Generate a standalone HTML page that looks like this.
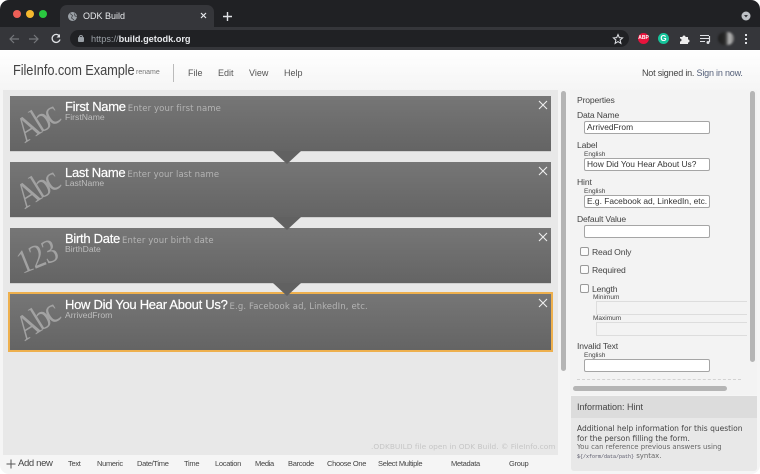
<!DOCTYPE html>
<html><head><meta charset="utf-8"><style>
*{box-sizing:border-box}
html,body{margin:0;padding:0;background:#fff}
body{width:760px;height:474px;position:relative;overflow:hidden;font-family:"Liberation Sans",sans-serif}
.a{position:absolute;white-space:nowrap}
.card{position:absolute;left:10px;width:541px;height:56px;background:linear-gradient(#767676,#646464);overflow:hidden}
.card .t{position:absolute;left:55px;top:3px;font-size:13px;line-height:16px;color:#fff;white-space:nowrap;letter-spacing:-.28px;-webkit-text-stroke:.2px #fff}
.card .h{font:8.5px "DejaVu Sans",sans-serif;color:#b4b4b4;letter-spacing:.12px;margin-left:2px;-webkit-text-stroke:0}
.card .n{position:absolute;left:55px;top:16px;font-size:8.6px;line-height:11px;color:#bdbdbd;white-space:nowrap}
.card .g{position:absolute;left:3px;top:10px;width:48px;height:34px;text-align:center;font:30px/34px "Liberation Serif",serif;color:#a2a2a2;transform:rotate(-32deg) scaleY(1.2);letter-spacing:-2.5px}
.card svg{position:absolute;right:3px;top:4px}
.arr{position:absolute;left:273px;width:0;height:0;border-left:14px solid transparent;border-right:14px solid transparent;border-top:13px solid #616161}
.lab{position:absolute;left:577px;font-size:8.6px;line-height:11px;color:#444;white-space:nowrap;letter-spacing:-.15px}
.en{position:absolute;left:584px;font-size:6.5px;line-height:8px;color:#444}
.inp{position:absolute;left:584px;width:126px;height:13px;background:#fff;border:1px solid #a5a5a5;border-radius:2px;font-size:8.4px;line-height:11px;padding-left:2px;color:#333;white-space:nowrap}
.cb{position:absolute;left:580px;width:9px;height:9px;background:#fbfbfb;border:1px solid #999;border-radius:2px}
.b{position:absolute;top:459px;font-size:7.5px;line-height:10px;color:#444;white-space:nowrap;letter-spacing:-.3px}
</style></head><body>
<!-- browser chrome -->
<div class="a" style="left:0;top:0;width:760px;height:27px;background:#202124;border-radius:9px 9px 0 0"></div>
<div class="a" style="left:0;top:27px;width:760px;height:23px;background:#35363a"></div>
<div class="a" style="left:13px;top:10px;width:8px;height:8px;border-radius:50%;background:#ed5f57"></div>
<div class="a" style="left:26px;top:10px;width:8px;height:8px;border-radius:50%;background:#f5b82e"></div>
<div class="a" style="left:39px;top:10px;width:8px;height:8px;border-radius:50%;background:#2ac840"></div>
<div class="a" style="left:60px;top:5px;width:154px;height:22px;background:#35363a;border-radius:7px 7px 0 0"></div>
<svg class="a" style="left:68px;top:12px" width="9" height="9"><circle cx="4.5" cy="4.5" r="4.5" fill="#9aa0a6"/><path d="M2 1.5L4.5 3.5L3.5 6L6 8M6.5 1.5L7 4L8.8 4.5" fill="none" stroke="#35363a" stroke-width=".7"/></svg>
<div class="a" style="left:83px;top:10px;font-size:9px;line-height:12px;color:#e8eaed">ODK Build</div>
<svg class="a" style="left:199px;top:11px" width="9" height="9"><path d="M2 2L7 7M7 2L2 7" stroke="#e8eaed" stroke-width="1.2"/></svg>
<svg class="a" style="left:222px;top:11px" width="11" height="11"><path d="M5.5 1V10M1 5.5H10" stroke="#dfe1e5" stroke-width="1.4"/></svg>
<svg class="a" style="left:741px;top:11px" width="10" height="10"><circle cx="5" cy="5" r="4.5" fill="#bdc1c6"/><path d="M3 4L5 6.5L7 4Z" fill="#35363a"/></svg>
<svg class="a" style="left:8px;top:33px" width="12" height="12"><path d="M11 6H2M6 2L2 6L6 10" fill="none" stroke="#75777b" stroke-width="1.2"/></svg>
<svg class="a" style="left:28px;top:33px" width="12" height="12"><path d="M1 6H10M6 2L10 6L6 10" fill="none" stroke="#75777b" stroke-width="1.2"/></svg>
<svg class="a" style="left:50px;top:33px" width="12" height="12"><path d="M9.5 3.2A4 4 0 1 0 10 6.5" fill="none" stroke="#dfe1e5" stroke-width="1.3"/><path d="M10 1V4.5H6.5Z" fill="#dfe1e5"/></svg>
<div class="a" style="left:70px;top:30px;width:559px;height:17px;background:#202124;border-radius:9px"></div>
<div class="a" style="left:78px;top:37px;width:6px;height:5px;background:#9aa0a6;border-radius:1px"></div>
<div class="a" style="left:79px;top:35px;width:4px;height:4px;border:1px solid #9aa0a6;border-radius:2px 2px 0 0"></div>
<div class="a" style="left:91px;top:33px;font-size:9.2px;line-height:12px;color:#9aa0a6">https://<span style="color:#e8eaed;font-weight:bold">build.getodk.org</span></div>
<svg class="a" style="left:612px;top:33px" width="12" height="12"><path d="M6 1.5L7.3 4.6L10.6 4.9L8.1 7.1L8.9 10.4L6 8.6L3.1 10.4L3.9 7.1L1.4 4.9L4.7 4.6Z" fill="none" stroke="#dfe1e5" stroke-width="1"/></svg>
<div class="a" style="left:638px;top:33px;width:11px;height:11px;border-radius:50%;background:#e8133c;color:#fff;font:bold 5px/11px 'Liberation Sans',sans-serif;text-align:center">ABP</div>
<div class="a" style="left:658px;top:33px;width:11px;height:11px;border-radius:50%;background:#15c39a;color:#fff;font:bold 8px/11px 'Liberation Sans',sans-serif;text-align:center">G</div>
<svg class="a" style="left:679px;top:33px" width="12" height="12"><path d="M1 4H3.5A1.5 1.5 0 0 1 6.5 4H9V6.5A1.5 1.5 0 0 1 9 9.5V11H1V8.5A1.5 1.5 0 0 0 1 5.5Z" fill="#eee"/></svg>
<svg class="a" style="left:699px;top:33px" width="13" height="12"><path d="M1 2.5H10M1 5.5H10M1 8.5H6" stroke="#dfe1e5" stroke-width="1.1"/><path d="M10.5 3V9" stroke="#dfe1e5" stroke-width="1.2"/><circle cx="9" cy="9.5" r="1.5" fill="#dfe1e5"/></svg>
<div class="a" style="left:718px;top:32px;width:16px;height:13px;border-radius:7px;background:linear-gradient(90deg,#1c1c1c 0,#2a2a2a 45%,#bbb 70%,#777 100%);filter:blur(1px)"></div>
<div class="a" style="left:745px;top:34px;width:2px;height:2px;background:#dfe1e5;box-shadow:0 4px 0 #dfe1e5,0 8px 0 #dfe1e5"></div>

<!-- header -->
<div class="a" style="left:0;top:50px;width:760px;height:424px;background:#f5f5f5;border-radius:0 0 9px 9px"></div>
<div class="a" style="left:0;top:50px;width:760px;height:40px;background:linear-gradient(#fff,#f5f5f5)"></div>
<div class="a" style="left:13px;top:62px;font-size:15px;line-height:18px;color:#444;transform:scaleX(.855);transform-origin:0 0;letter-spacing:-.1px">FileInfo.com Example</div>
<div class="a" style="left:136px;top:68px;font-size:7px;line-height:10px;color:#777">rename</div>
<div class="a" style="left:173px;top:64px;width:1px;height:18px;background:#bbb"></div>
<div class="a" style="left:188px;top:67px;font-size:9px;line-height:12px;color:#555">File</div>
<div class="a" style="left:218px;top:67px;font-size:9px;line-height:12px;color:#555">Edit</div>
<div class="a" style="left:249px;top:67px;font-size:9px;line-height:12px;color:#555">View</div>
<div class="a" style="left:284px;top:67px;font-size:9px;line-height:12px;color:#555">Help</div>
<div class="a" style="left:642px;top:67px;font-size:9px;line-height:12px;color:#444;letter-spacing:-.2px">Not signed in. <span style="color:#55607a">Sign in now.</span></div>

<!-- workspace -->
<div class="a" style="left:3px;top:90px;width:555px;height:365px;background:#e8e8e8"></div>
<div class="a" style="left:561px;top:91px;width:5px;height:280px;background:#b5b5b5;border-radius:3px"></div>

<div class="a" style="left:8px;top:292px;width:545px;height:60px;background:#eeb04e"></div>

<div class="card" style="top:96px;border-bottom:1px solid #d0d0d0"><div class="g">Abc</div><div class="t">First Name<span class="h">Enter your first name</span></div><div class="n">FirstName</div><svg width="10" height="10"><path d="M1 1L9 9M9 1L1 9" stroke="#eee" stroke-width="1.1"/></svg></div>
<div class="card" style="top:162px;border-bottom:1px solid #d0d0d0"><div class="g">Abc</div><div class="t">Last Name<span class="h">Enter your last name</span></div><div class="n">LastName</div><svg width="10" height="10"><path d="M1 1L9 9M9 1L1 9" stroke="#eee" stroke-width="1.1"/></svg></div>
<div class="card" style="top:228px;border-bottom:1px solid #d0d0d0"><div class="g" style="letter-spacing:-1px;font-size:29px;top:12px;transform:rotate(-22deg) scaleY(1.15)">123</div><div class="t">Birth Date<span class="h">Enter your birth date</span></div><div class="n">BirthDate</div><svg width="10" height="10"><path d="M1 1L9 9M9 1L1 9" stroke="#eee" stroke-width="1.1"/></svg></div>
<div class="card" style="top:294px;height:56px;left:10px;width:541px"><div class="g">Abc</div><div class="t">How Did You Hear About Us?<span class="h">E.g. Facebook ad, LinkedIn, etc.</span></div><div class="n">ArrivedFrom</div><svg width="10" height="10"><path d="M1 1L9 9M9 1L1 9" stroke="#eee" stroke-width="1.1"/></svg></div>
<div class="arr" style="top:151px"></div>
<div class="arr" style="top:217px"></div>
<div class="arr" style="top:283px"></div>

<div class="a" style="left:371px;top:441px;font:7.4px/12px 'DejaVu Sans',sans-serif;color:#c6c6c6;letter-spacing:.03px">.ODKBUILD file open in ODK Build. © FileInfo.com</div>

<!-- toolbar -->
<svg class="a" style="left:6px;top:459px" width="10" height="10"><path d="M5 .5V9.5M.5 5H9.5" stroke="#555" stroke-width="1"/></svg>
<div class="a" style="left:18px;top:458px;font-size:9.5px;line-height:12px;color:#444;letter-spacing:-.35px">Add new</div>
<div class="b" style="left:68px">Text</div>
<div class="b" style="left:97px">Numeric</div>
<div class="b" style="left:137px">Date/Time</div>
<div class="b" style="left:184px">Time</div>
<div class="b" style="left:215px">Location</div>
<div class="b" style="left:255px">Media</div>
<div class="b" style="left:288px">Barcode</div>
<div class="b" style="left:327px">Choose One</div>
<div class="b" style="left:378px">Select Multiple</div>
<div class="b" style="left:451px">Metadata</div>
<div class="b" style="left:509px">Group</div>

<!-- properties -->
<div class="a" style="left:570px;top:90px;width:187px;height:305px;background:#f3f3f3"></div>
<div class="a" style="left:750px;top:91px;width:5px;height:271px;background:#b5b5b5;border-radius:3px"></div>
<div class="lab" style="top:95px">Properties</div>
<div class="lab" style="top:110px">Data Name</div>
<div class="inp" style="top:121px">ArrivedFrom</div>
<div class="lab" style="top:140px">Label</div>
<div class="en" style="top:151px">English</div>
<div class="inp" style="top:158px">How Did You Hear About Us?</div>
<div class="lab" style="top:177px">Hint</div>
<div class="en" style="top:188px">English</div>
<div class="inp" style="top:195px">E.g. Facebook ad, LinkedIn, etc.</div>
<div class="lab" style="top:214px">Default Value</div>
<div class="inp" style="top:225px"></div>
<div class="cb" style="top:247px"></div><div class="lab" style="left:592px;top:247px">Read Only</div>
<div class="cb" style="top:265px"></div><div class="lab" style="left:592px;top:265px">Required</div>
<div class="cb" style="top:284px"></div><div class="lab" style="left:592px;top:284px">Length</div>
<div class="en" style="left:593px;top:294px">Minimum</div>
<div class="a" style="left:596px;top:301px;width:151px;height:14px;background:#f3f3f3;border:1px solid #ddd;border-right:0"></div>
<div class="en" style="left:593px;top:315px">Maximum</div>
<div class="a" style="left:596px;top:322px;width:151px;height:14px;background:#f3f3f3;border:1px solid #ddd;border-right:0"></div>
<div class="lab" style="top:341px">Invalid Text</div>
<div class="en" style="top:352px">English</div>
<div class="inp" style="top:359px"></div>
<div class="a" style="left:577px;top:379px;width:164px;border-top:1px dashed #d2d2d2"></div>
<div class="a" style="left:573px;top:386px;width:154px;height:5px;background:#b5b5b5;border-radius:3px"></div>

<!-- info -->
<div class="a" style="left:571px;top:396px;width:186px;height:75px;background:#e8e8e8;border-radius:0 0 3px 3px"></div>
<div class="a" style="left:571px;top:396px;width:186px;height:22px;background:#dcdcdc"></div>
<div class="a" style="left:577px;top:402px;font-size:9px;line-height:11px;color:#444">Information: Hint</div>
<div class="a" style="left:577px;top:424px;font:7.5px/9.5px 'DejaVu Sans',sans-serif;color:#444">Additional help information for this question<br>for the person filling the form.</div>
<div class="a" style="left:577px;top:443px;font:6.9px/9px 'DejaVu Sans',sans-serif;color:#666">You can reference previous answers using</div>
<div class="a" style="left:577px;top:452px;font:6.9px/9px 'DejaVu Sans',sans-serif;color:#666"><span style="font:5px 'Liberation Mono',monospace;color:#556">${/xform/data/path}</span> syntax.</div>
</body></html>
